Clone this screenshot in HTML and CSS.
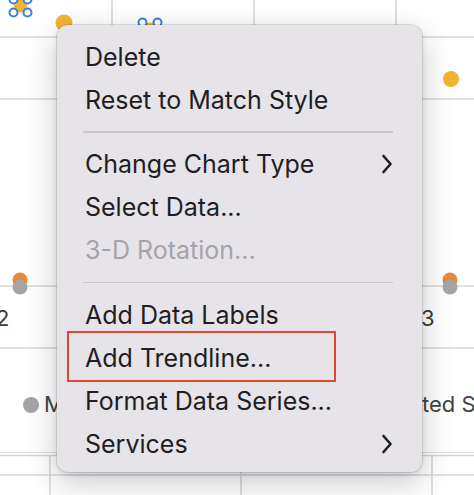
FILE: index.html
```html
<!DOCTYPE html>
<html>
<head>
<meta charset="utf-8">
<link rel="stylesheet" href="styles.css">
</head>
<body>
<div class="stage">
  <svg class="chart" width="474" height="495" viewBox="0 0 474 495">
    <g class="grid">
      <line x1="0" y1="37" x2="474" y2="37"/>
      <line x1="0" y1="99" x2="474" y2="99"/>
      <line x1="0" y1="286" x2="474" y2="286"/>
      <line x1="0" y1="348" x2="474" y2="348"/>
      <line x1="112" y1="0" x2="112" y2="348"/>
      <line x1="254" y1="0" x2="254" y2="348"/>
      <line x1="396" y1="0" x2="396" y2="348"/>
      <line x1="0" y1="452.5" x2="474" y2="452.5" class="thin"/>
      <line x1="0" y1="455.5" x2="474" y2="455.5"/>
      <line x1="0" y1="475" x2="474" y2="475"/>
      <line x1="50" y1="455" x2="50" y2="495"/>
      <line x1="241" y1="455" x2="241" y2="495"/>
      <line x1="432" y1="455" x2="432" y2="495"/>
    </g>
    <circle cx="20.5" cy="6" r="6.5" class="yellow"/>
    <g class="handle">
      <circle cx="13.5" cy="-0.5" r="4"/>
      <circle cx="27.5" cy="-0.5" r="4"/>
      <circle cx="13.5" cy="12.5" r="4"/>
      <circle cx="27.5" cy="12.5" r="4"/>
    </g>
    <circle cx="64" cy="23" r="8.5" class="yellow"/>
    <circle cx="150" cy="29" r="6.5" class="yellow"/>
    <g class="handle">
      <circle cx="142.5" cy="22.5" r="4"/>
      <circle cx="157.5" cy="22.5" r="4"/>
      <circle cx="142.5" cy="36" r="4"/>
      <circle cx="157.5" cy="36" r="4"/>
    </g>
    <circle cx="451" cy="79" r="8" class="yellow"/>
    <circle cx="20" cy="280" r="7.5" class="orange"/>
    <circle cx="20" cy="287" r="7.5" class="grey"/>
    <circle cx="450" cy="280" r="7.5" class="orange"/>
    <circle cx="450" cy="287" r="7.5" class="grey"/>
    <circle cx="31" cy="405" r="8" class="grey"/>
  </svg>

  <span class="axis-label label-2">2</span>
  <span class="axis-label label-3">3</span>
  <span class="legend legend-left">M</span>
  <span class="legend legend-right">ted S</span>

  <div class="menu">
    <div class="item">Delete</div>
    <div class="item">Reset to Match Style</div>
    <div class="sep"></div>
    <div class="item">Change Chart Type
      <svg class="chev" width="12" height="20" viewBox="0 0 12 20"><path d="M2.5 2 L9.5 10 L2.5 18"/></svg>
    </div>
    <div class="item">Select Data...</div>
    <div class="item disabled">3-D Rotation...</div>
    <div class="sep"></div>
    <div class="item">Add Data Labels</div>
    <div class="item highlight">Add Trendline...<span class="redbox"></span></div>
    <div class="item">Format Data Series...</div>
    <div class="item">Services
      <svg class="chev" width="12" height="20" viewBox="0 0 12 20"><path d="M2.5 2 L9.5 10 L2.5 18"/></svg>
    </div>
  </div>
</div>
</body>
</html>
```

FILE: styles.css
```css
html, body {
  margin: 0;
  padding: 0;
  background: #ffffff;
}
.stage {
  position: relative;
  width: 474px;
  height: 495px;
  overflow: hidden;
  font-family: "Inter", "Liberation Sans", sans-serif;
}
.chart {
  position: absolute;
  left: 0;
  top: 0;
  display: block;
}
.grid line {
  stroke: #d6d6d6;
  stroke-width: 1.6;
}
.grid line.thin {
  stroke: #dedede;
  stroke-width: 1;
}
.yellow { fill: #f2b431; }
.orange { fill: #e8893b; }
.grey { fill: #a5a5a7; }
.handle circle {
  fill: #ffffff;
  stroke: #3e7fda;
  stroke-width: 2;
}
.axis-label {
  position: absolute;
  font-size: 22px;
  color: #3b3b3b;
  line-height: 26px;
  white-space: nowrap;
}
.label-2 { left: -4px; top: 305px; }
.label-3 { left: 421px; top: 305px; }
.legend {
  position: absolute;
  font-size: 22px;
  color: #444444;
  line-height: 26px;
  top: 391px;
  white-space: nowrap;
}
.legend-left { left: 44px; }
.legend-right { left: 422px; }

.menu {
  position: absolute;
  left: 57px;
  top: 25px;
  width: 365px;
  height: 447px;
  box-sizing: border-box;
  padding: 10px 0 7px;
  background: #e6e3e9;
  border-radius: 11px;
  box-shadow: 0 0 0 1px rgba(0,0,0,0.10), 0 10px 32px rgba(0,0,0,0.22), 0 2px 6px rgba(0,0,0,0.08);
  display: flex;
  flex-direction: column;
}
.item {
  position: relative;
  height: 43px;
  flex: none;
  display: flex;
  align-items: center;
  justify-content: space-between;
  padding: 0 29px 0 28px;
  font-size: 25px;
  line-height: 30px;
  color: #1f1e22;
  white-space: nowrap;
}
.item.disabled {
  color: #a6a3aa;
}
.sep {
  flex: none;
  height: 1.5px;
  margin: 10px 29px 10px 26px;
  background: #c9c6cc;
}
.chev {
  display: block;
}
.chev path {
  fill: none;
  stroke: #1f1e22;
  stroke-width: 2.6;
  stroke-linecap: round;
  stroke-linejoin: round;
}
.redbox {
  position: absolute;
  left: 10px;
  top: -5px;
  width: 269px;
  height: 51px;
  box-sizing: border-box;
  border: 2px solid #e04632;
  pointer-events: none;
}
```
